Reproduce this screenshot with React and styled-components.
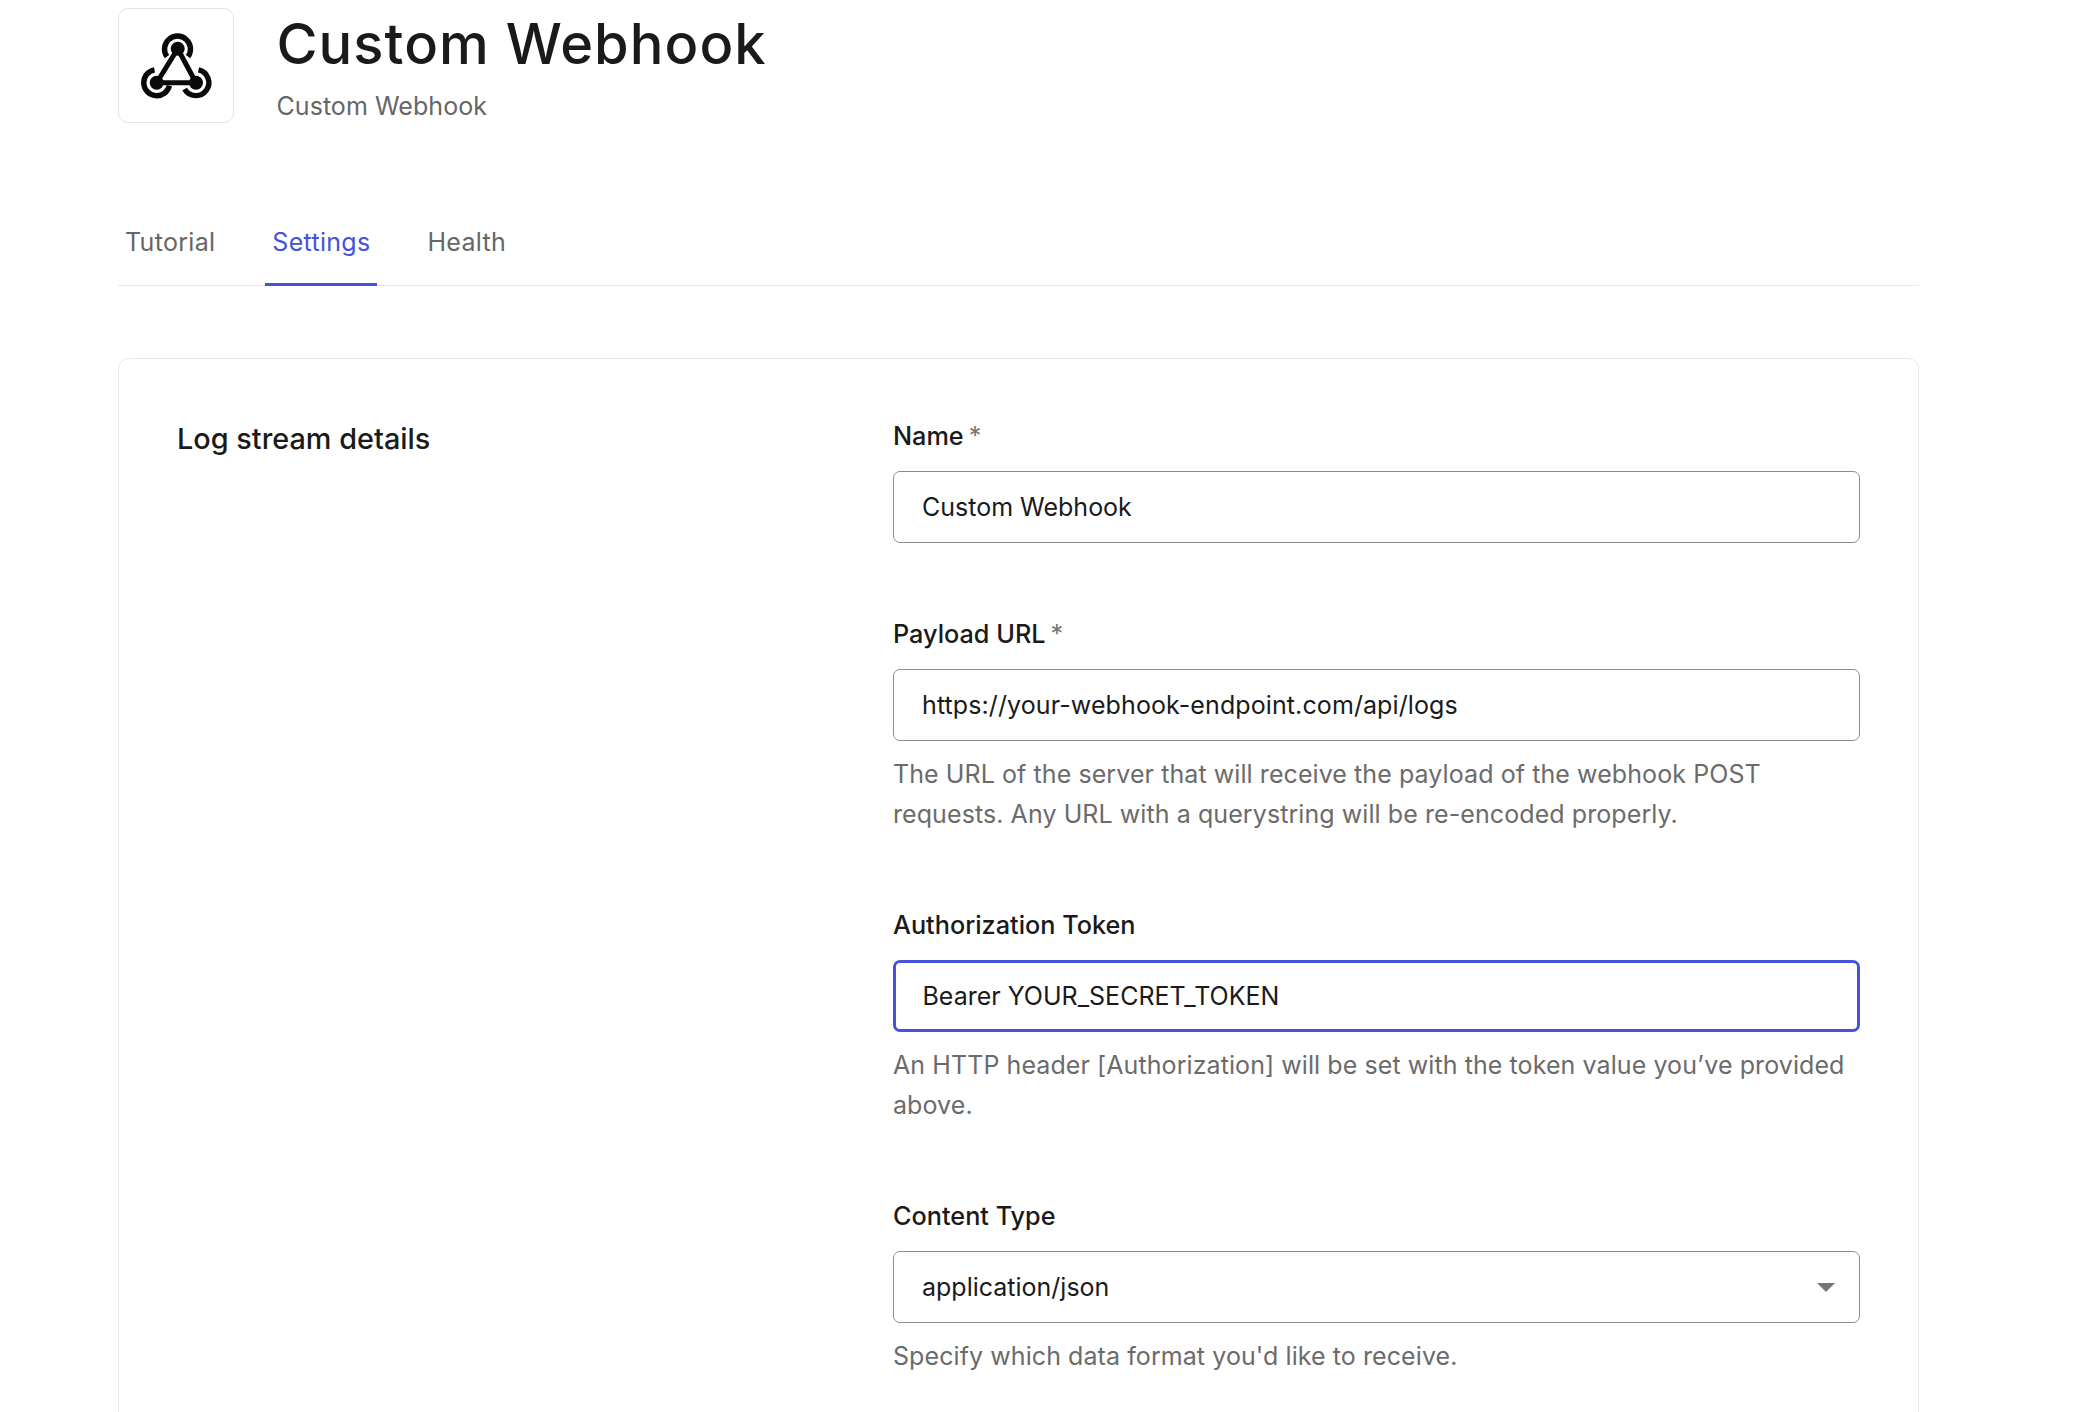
import React from 'react';
import styled, { createGlobalStyle } from 'styled-components';

const Global = createGlobalStyle`
  html, body { margin: 0; padding: 0; background: #fff; height: 1412px; overflow: hidden; }
  body { font-family: Inter, "Liberation Sans", sans-serif; color: #1a1a1a; }
`;
const Page = styled.div`
  width: 1801px;
  margin-left: 118px;
  padding-top: 8px;
`;
const Header = styled.header`
  display: flex;
  gap: 42.5px;
  height: 115px;
`;
const LogoBox = styled.div`
  box-sizing: border-box;
  width: 116px;
  height: 115px;
  border: 1.5px solid #e3e3e3;
  border-radius: 10px;
  display: flex;
  align-items: center;
  justify-content: center;
`;
const Title = styled.h1`
  margin: 2px 0 0;
  font-size: 56px;
  line-height: 68px;
  font-weight: 520;
  letter-spacing: 1.05px;
  color: #1a1a1a;
`;
const Subtitle = styled.div`
  margin-top: 13px;
  font-size: 25px;
  line-height: 30px;
  letter-spacing: 0.05px;
  color: #666;
`;
const Tabs = styled.nav`
  display: flex;
  margin-top: 49px;
  height: 114px;
  box-sizing: border-box;
  border-bottom: 1px solid #e8e8e8;
  align-items: stretch;
`;
const Tab = styled.div`
  box-sizing: border-box;
  padding: 54.5px 7px 0;
  margin-right: 43px;
  font-size: 25px;
  line-height: 30px;
  letter-spacing: 0.3px;
  color: ${p => (p.$active ? '#4353dd' : '#666')};
  border-bottom: 3px solid ${p => (p.$active ? '#4353dd' : 'transparent')};
  margin-bottom: -1px;
`;
const Card = styled.section`
  box-sizing: border-box;
  margin-top: 72px;
  border: 1px solid #e8e8e8;
  border-radius: 11px;
  padding: 61px 58px 60px;
  display: grid;
  grid-template-columns: 716px 1fr;
  height: 1400px;
`;
const SectionTitle = styled.h2`
  margin: 1px 0 0;
  font-size: 28.85px;
  line-height: 36px;
  font-weight: 500;
  color: #1a1a1a;
`;
const Form = styled.div`
  display: flex;
  flex-direction: column;
`;
const Field = styled.div`
  margin-bottom: 75px;
`;
const Label = styled.label`
  display: block;
  font-size: 25.25px;
  line-height: 32px;
  font-weight: 500;
  margin-bottom: 19px;
  color: #1a1a1a;
`;
const Req = styled.span`
  color: #777;
  font-weight: 400;
  margin-left: 5px;
`;
const Input = styled.div`
  box-sizing: border-box;
  height: 72px;
  border: ${p => (p.$focus ? '3px solid #4353dd' : '1.5px solid #8c8c8c')};
  border-radius: 7px;
  padding: 0 ${p => (p.$focus ? '26.5px' : '28px')};
  display: flex;
  align-items: center;
  justify-content: space-between;
  font-size: 25px;
  letter-spacing: ${p => (p.$wide ? '0.1px' : '0')};
  color: #1a1a1a;
`;
const Help = styled.p`
  margin: 13px 0 0;
  font-size: 25px;
  line-height: 40px;
  letter-spacing: 0.08px;
  color: #6b6b6b;
`;
const Caret = styled.span`
  width: 0;
  height: 0;
  border-left: 9px solid transparent;
  border-right: 9px solid transparent;
  border-top: 9px solid #777;
  margin-right: -4px;
`;

const WebhookIcon = () => (
  <svg width="80" height="80" viewBox="0 0 80 80" fill="none" stroke="#0a0a0a">
    <path strokeWidth="5.4" d="M31 30.7A13 13 0 1 1 52 30.7" />
    <path strokeWidth="5.4" d="M18.5 43.9A13 13 0 1 0 33.4 59.6" />
    <path strokeWidth="5.4" d="M62.5 43.9A13 13 0 1 1 48.6 63.2" />
    <path strokeWidth="5" strokeLinejoin="round" d="M41.7 22.7L20.7 56.7H60Z" />
    <circle cx="41.7" cy="22.7" r="7" fill="#0a0a0a" stroke="none" />
    <circle cx="20.7" cy="56.7" r="7" fill="#0a0a0a" stroke="none" />
    <circle cx="60" cy="56.7" r="7" fill="#0a0a0a" stroke="none" />
  </svg>
);

export default function App() {
  return (
    <Page>
      <Global />
      <Header>
        <LogoBox><WebhookIcon /></LogoBox>
        <div>
          <Title>Custom Webhook</Title>
          <Subtitle>Custom Webhook</Subtitle>
        </div>
      </Header>
      <Tabs>
        <Tab>Tutorial</Tab>
        <Tab $active>Settings</Tab>
        <Tab>Health</Tab>
      </Tabs>
      <Card>
        <SectionTitle>Log stream details</SectionTitle>
        <Form>
          <Field>
            <Label>Name<Req>*</Req></Label>
            <Input>Custom Webhook</Input>
          </Field>
          <Field>
            <Label>Payload URL<Req>*</Req></Label>
            <Input $wide>https://your-webhook-endpoint.com/api/logs</Input>
            <Help>The URL of the server that will receive the payload of the webhook POST requests. Any URL with a querystring will be re-encoded properly.</Help>
          </Field>
          <Field>
            <Label>Authorization Token</Label>
            <Input $focus>Bearer YOUR_SECRET_TOKEN</Input>
            <Help>An HTTP header [Authorization] will be set with the token value you’ve provided above.</Help>
          </Field>
          <Field>
            <Label>Content Type</Label>
            <Input>application/json<Caret /></Input>
            <Help>Specify which data format you'd like to receive.</Help>
          </Field>
        </Form>
      </Card>
    </Page>
  );
}
